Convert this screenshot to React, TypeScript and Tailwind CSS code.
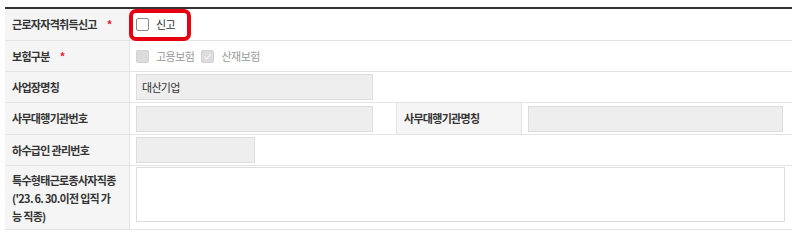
import React from 'react';

const font = { fontFamily: '"Noto Sans CJK KR", "Noto Sans", sans-serif' };

const Label: React.FC<{ children: React.ReactNode; required?: boolean; className?: string }> = ({ children, required, className }) => (
    <div className={`w-[125px] shrink-0 bg-[#f5f5f5] border-r border-[#e3e3e3] pl-[7px] pr-[3px] flex items-center text-[11px] font-bold text-[#333] tracking-[-0.7px] ${className ?? ''}`}>
        <span>{children}</span>
        {required && <span className="text-[#e8202a] ml-[10px]">*</span>}
    </div>
);

const Field: React.FC<{ width: string; value?: string }> = ({ width, value }) => (
    <div className={`${width} h-[26px] bg-[#eeeeee] border border-[#dddddd] flex items-center px-[5px] text-[11px] text-[#333] tracking-[-0.7px]`}>
        {value}
    </div>
);

export default function App() {
    return (
        <div className="bg-white w-[800px] h-[241px] pt-[7px] pl-[5px]" style={font}>
            <div className="w-[787px] border-t-2 border-[#333]">
                {/* 근로자자격취득신고 */}
                <div className="relative flex h-[32px] border-b border-[#e3e3e3]">
                    <Label required>근로자자격취득신고</Label>
                    <div className="flex items-center pl-[6px] gap-[7px]">
                        <span className="w-[13px] h-[13px] border border-[#8a8a8a] rounded-[2px] bg-white" />
                        <span className="text-[11px] text-[#333] tracking-[-0.5px]">신고</span>
                    </div>
                    <div className="absolute left-[124px] top-0 w-[62px] h-[32px] border-[4px] border-[#e60012] rounded-[7px]" />
                </div>

                {/* 보험구분 */}
                <div className="flex h-[31px] border-b border-[#e3e3e3]">
                    <Label required>보험구분</Label>
                    <div className="flex items-center pl-[6px]">
                        <span className="w-[13px] h-[13px] rounded-[2px] bg-[#dcdcdc] border border-[#d2d2d2]" />
                        <span className="ml-[7px] text-[11px] text-[#9a9a9a] tracking-[-0.5px]">고용보험</span>
                        <span className="ml-[7px] w-[13px] h-[13px] rounded-[2px] bg-[#dcdcdc] border border-[#d2d2d2] flex items-center justify-center">
                            <svg width="9" height="9" viewBox="0 0 10 10" fill="none">
                                <path d="M1.5 5.2 4 7.6 8.6 2.6" stroke="#f2f2f2" strokeWidth="1.6" />
                            </svg>
                        </span>
                        <span className="ml-[7px] text-[11px] text-[#9a9a9a] tracking-[-0.5px]">산재보험</span>
                    </div>
                </div>

                {/* 사업장명칭 */}
                <div className="flex h-[31px] border-b border-[#e3e3e3]">
                    <Label>사업장명칭</Label>
                    <div className="flex items-center pl-[6px]">
                        <Field width="w-[237px]" value="대산기업" />
                    </div>
                </div>

                {/* 사무대행기관 */}
                <div className="flex h-[32px] border-b border-[#e3e3e3]">
                    <Label>사무대행기관번호</Label>
                    <div className="w-[267px] flex items-center pl-[6px] border-r border-[#e3e3e3]">
                        <Field width="w-[237px]" />
                    </div>
                    <Label>사무대행기관명칭</Label>
                    <div className="flex items-center pl-[6px]">
                        <Field width="w-[255px]" />
                    </div>
                </div>

                {/* 하수급인 관리번호 */}
                <div className="flex h-[31px] border-b border-[#e3e3e3]">
                    <Label>하수급인 관리번호</Label>
                    <div className="flex items-center pl-[6px]">
                        <Field width="w-[119px]" />
                    </div>
                </div>

                {/* 특수형태근로종사자직종 */}
                <div className="flex h-[64px] border-b border-[#e3e3e3]">
                    <Label className="leading-[18px]">
                        특수형태근로종사자직종<br />('23. 6. 30.이전 입직 가<br />능 직종)
                    </Label>
                    <div className="pl-[6px] pt-[1px]">
                        <textarea className="block w-[649px] h-[55px] border border-[#dddddd] bg-white resize-none outline-none" />
                    </div>
                </div>
            </div>
        </div>
    );
}
